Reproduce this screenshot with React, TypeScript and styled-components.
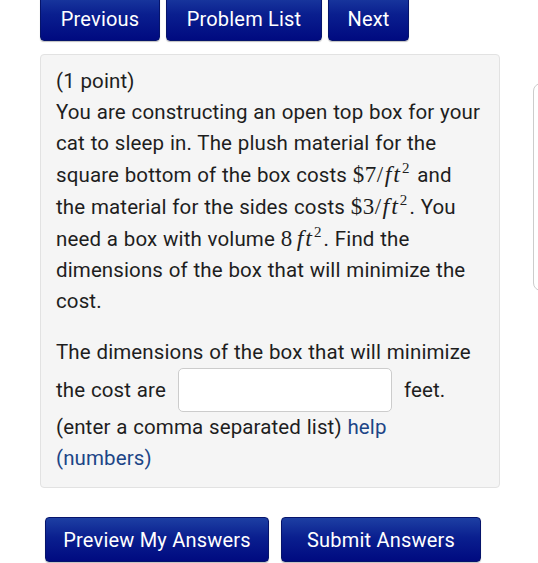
import styled, { createGlobalStyle } from "styled-components";

const Global = createGlobalStyle`
  html, body { margin: 0; padding: 0; background: #fff; overflow: hidden; }
  body { font-family: Roboto, "Noto Sans", sans-serif; color: #222; }
`;

const Page = styled.div`
  display: flex;
  width: 538px;
  height: 563px;
  overflow: hidden;
`;

const Main = styled.div`
  width: 460px;
  margin-left: 40px;
  flex-shrink: 0;
  display: flex;
  flex-direction: column;
`;

const Side = styled.div`
  margin-left: 33px;
  margin-top: 83px;
  width: 40px;
  height: 206px;
  flex-shrink: 0;
  border: 1px solid #ccc;
  border-radius: 8px;
`;

const Nav = styled.div`
  display: flex;
  gap: 6px;
  margin-top: -8px;
`;

const Button = styled.button<{ $w: number; $h: number }>`
  width: ${(p) => p.$w}px;
  height: ${(p) => p.$h}px;
  border: 1px solid #06146b;
  border-radius: 4px;
  background: linear-gradient(to bottom, #1d3fa3 0%, #0a1f8f 45%, #000a80 100%);
  color: #fff;
  font-family: Roboto, sans-serif;
  font-size: 20px;
  letter-spacing: 0.2px;
  padding: 0;
  padding-top: ${(p) => (p.$h > 45 ? 5 : 0)}px;
  box-shadow: 0 1px 1px rgba(0, 0, 0, 0.25);
`;

const Panel = styled.div`
  margin-top: 13px;
  background: #f5f5f5;
  border: 1px solid #e2e2e2;
  border-radius: 4px;
  padding: 11px 15px 14px 15px;
  height: 434px;
  box-sizing: border-box;
  font-size: 20.5px;
  letter-spacing: 0.12px;
  word-spacing: 0.5px;
  line-height: 31px;
  color: #1e1e1e;
`;

const Para = styled.p`
  margin: 0;
`;

const Gap = styled.div`
  height: 20px;
`;

const Math = styled.span`
  font-family: "Liberation Serif", "DejaVu Serif", serif;
  font-size: 23px;
  letter-spacing: 0.5px;
`;

const Var = styled.i<{ $pad?: number }>`
  font-family: "Liberation Serif", "DejaVu Serif", serif;
  font-size: 24px;
  letter-spacing: 2px;
  padding-left: ${(p) => p.$pad ?? 1}px;
`;

const Sup = styled.sup`
  font-family: "Liberation Serif", "DejaVu Serif", serif;
  font-size: 15px;
  line-height: 0;
  vertical-align: 9px;
  margin-right: 2px;
`;

const AnswerRow = styled.div`
  display: flex;
  align-items: center;
  gap: 12px;
  margin-top: 0;
`;

const Input = styled.input`
  width: 214px;
  height: 44px;
  box-sizing: border-box;
  border: 1px solid #ccc;
  border-radius: 5px;
  background: #fff;
`;

const Note = styled.p`
  margin: 0;
`;

const HelpLink = styled.a`
  color: #1c4587;
  text-decoration: none;
`;

const Actions = styled.div`
  display: flex;
  gap: 12px;
  margin-top: 29px;
  margin-left: 5px;
`;

function Unit({ pre, pad }: { pre: string; pad?: number }) {
  return (
    <>
      <Math>{pre}</Math>
      <Var $pad={pad}>ft</Var>
      <Sup>2</Sup>
    </>
  );
}

export default function App() {
  return (
    <>
      <Global />
      <Page>
        <Main>
          <Nav>
            <Button $w={120} $h={49}>Previous</Button>
            <Button $w={156} $h={49}>Problem List</Button>
            <Button $w={81} $h={49}>Next</Button>
          </Nav>
          <Panel>
            <Para>(1 point)</Para>
            <Para>
              You are constructing an open top box for your cat to sleep in. The
              plush material for the square bottom of the box costs{" "}
              <Unit pre="$7/" /> and the material for the sides costs{" "}
              <Unit pre="$3/" />. You need a box with volume{" "}
              <Unit pre="8" pad={4} />. Find the dimensions of the box that will
              minimize the cost.
            </Para>
            <Gap />
            <Para>The dimensions of the box that will minimize</Para>
            <AnswerRow>
              <span>the cost are</span>
              <Input />
              <span>feet.</span>
            </AnswerRow>
            <Note>
              (enter a comma separated list) <HelpLink>help (numbers)</HelpLink>
            </Note>
          </Panel>
          <Actions>
            <Button $w={224} $h={45}>Preview My Answers</Button>
            <Button $w={200} $h={45}>Submit Answers</Button>
          </Actions>
        </Main>
        <Side />
      </Page>
    </>
  );
}
